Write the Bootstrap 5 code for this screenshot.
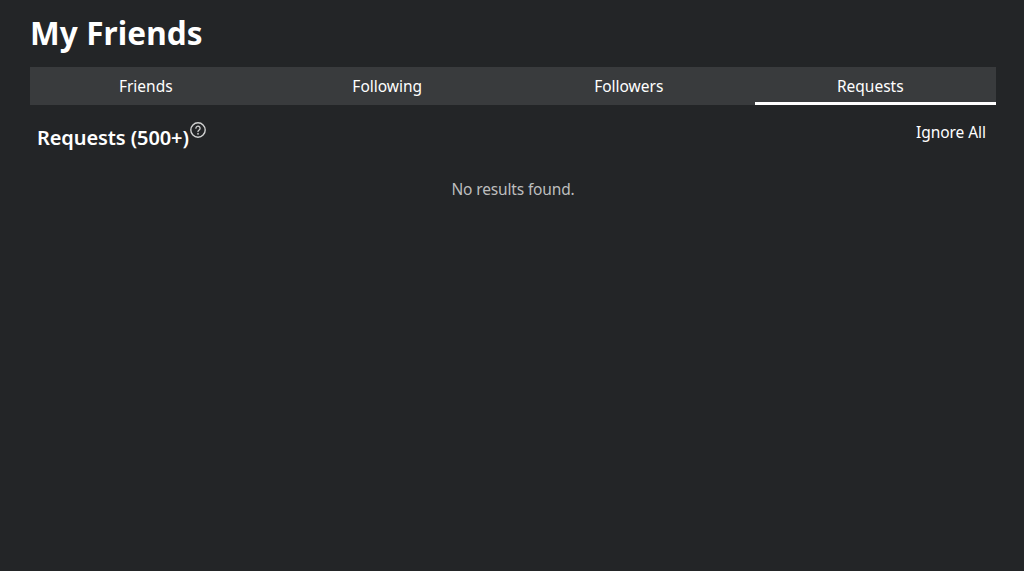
<!DOCTYPE html>
<html lang="en">
<head>
  <meta charset="UTF-8" />
  <meta name="viewport" content="width=device-width, initial-scale=1" />
  <title>My Friends</title>
  <link href="https://cdn.jsdelivr.net/npm/bootstrap@5.3.0/dist/css/bootstrap.min.css" rel="stylesheet">
  <style>
    body {
      background: #232527;
      color: #fff;
      font-family: "Noto Sans", "Open Sans", sans-serif;
      font-size: 15.5px;
      line-height: 24px;
    }
    .friends-page {
      padding: 11px 28px 0 30px;
    }
    .page-title {
      font-size: 31.5px;
      font-weight: 700;
      line-height: 43px;
      letter-spacing: 0.1px;
    }
    .friends-tabs {
      margin-top: 13px;
      background: #393b3d;
    }
    .friends-tabs .nav-link {
      height: 38px;
      padding: 7px 10px 0 0;
      color: #fff;
      border-radius: 0;
    }
    .friends-tabs .nav-link.active {
      color: #fff;
      background: transparent;
      box-shadow: inset 0 -3px 0 #fff;
    }
    .section-head {
      padding: 15px 10px 0 7px;
    }
    .section-title {
      margin-top: 4px;
      font-size: 20px;
      font-weight: 600;
      line-height: 28px;
      letter-spacing: -0.1px;
    }
    .help-icon {
      margin: 2px 0 0 1px;
    }
    .ignore-link {
      letter-spacing: -0.05px;
    }
    .empty-text {
      margin-top: 25px;
      color: #bdbebe;
      letter-spacing: -0.15px;
    }
  </style>
</head>
<body>
  <main class="friends-page">
    <h1 class="page-title mb-0">My Friends</h1>

    <ul class="nav nav-pills nav-justified friends-tabs">
      <li class="nav-item"><a class="nav-link" href="#">Friends</a></li>
      <li class="nav-item"><a class="nav-link" href="#">Following</a></li>
      <li class="nav-item"><a class="nav-link" href="#">Followers</a></li>
      <li class="nav-item"><a class="nav-link active" href="#">Requests</a></li>
    </ul>

    <div class="d-flex justify-content-between section-head">
      <div class="d-flex align-items-start">
        <h2 class="section-title mb-0">Requests (500+)</h2>
        <svg class="help-icon" width="16" height="16" viewBox="0 0 16 16" fill="none" stroke="#d0d1d1">
          <circle cx="8" cy="8" r="7.2" stroke-width="1.4" />
          <path d="M5.9 6.2a2.1 2.1 0 1 1 3.4 1.7C8.5 8.5 8 8.8 8 9.6" stroke-width="1.3" stroke-linecap="round" />
          <circle cx="8" cy="11.8" r="0.9" fill="#d0d1d1" stroke="none" />
        </svg>
      </div>
      <a class="ignore-link text-white text-decoration-none" href="#">Ignore All</a>
    </div>

    <p class="empty-text text-center mb-0">No results found.</p>
  </main>

  <script src="https://cdn.jsdelivr.net/npm/bootstrap@5.3.0/dist/js/bootstrap.bundle.min.js"></script>
</body>
</html>
